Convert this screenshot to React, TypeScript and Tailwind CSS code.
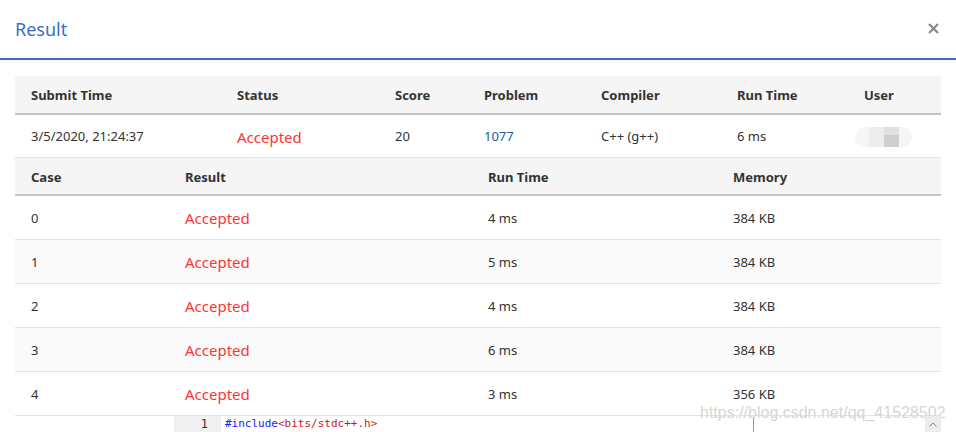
import React from "react";

const font = { fontFamily: '"Segoe UI", "Noto Sans", "Open Sans", sans-serif' };

const cases = [
  { c: "0", t: "4 ms", m: "384 KB" },
  { c: "1", t: "5 ms", m: "384 KB" },
  { c: "2", t: "4 ms", m: "384 KB" },
  { c: "3", t: "6 ms", m: "384 KB" },
  { c: "4", t: "3 ms", m: "356 KB" },
];

export default function App() {
  return (
    <div className="relative w-[956px] h-[432px] overflow-hidden bg-white text-[#333]" style={font}>
      <div className="h-[60px] flex items-center justify-between pl-[15px] pr-[17px] border-b-2 border-[#3b6cc5]">
        <div className="text-[18px] text-[#3b6cc5]">Result</div>
        <svg width="11" height="11" viewBox="0 0 11 11" className="-mt-[1px]">
          <path d="M1 1L10 10M10 1L1 10" stroke="#888" strokeWidth="2.2" />
        </svg>
      </div>
      <div className="mx-[15px] mt-[16px] text-[13px]">
        <div className="grid grid-cols-[206px_158px_89px_117px_136px_127px_93px] h-[39px] items-center bg-[#f5f5f5] border-b-2 border-[#c4c4c4] font-bold pt-[2px]">
          <div className="pl-[16px]">Submit Time</div>
          <div className="pl-[16px]">Status</div>
          <div className="pl-[16px]">Score</div>
          <div className="pl-[16px]">Problem</div>
          <div className="pl-[16px]">Compiler</div>
          <div className="pl-[16px]">Run Time</div>
          <div className="pl-[16px]">User</div>
        </div>
        <div className="grid grid-cols-[206px_158px_89px_117px_136px_127px_93px] h-[43px] items-center border-b border-[#e3e3e3] pt-[2px]">
          <div className="pl-[16px]">3/5/2020, 21:24:37</div>
          <div className="pl-[16px] text-[15px] text-[#ff3333]">Accepted</div>
          <div className="pl-[16px]">20</div>
          <div className="pl-[16px] text-[#1c58a3]">1077</div>
          <div className="pl-[16px]">C++ (g++)</div>
          <div className="pl-[16px]">6 ms</div>
          <div className="pl-[7px] flex">
            <div className="relative w-[57px] h-[20px] rounded-full bg-[#f4f4f4] overflow-hidden flex">
              <div className="w-[14px] h-full bg-[#f6f6f6]" />
              <div className="w-[15px] h-full bg-[#ececec]" />
              <div className="w-[15px] h-full flex flex-col">
                <div className="h-[8px] bg-[#e0e0e0]" />
                <div className="flex-1 bg-[#cfcfcf]" />
              </div>
              <div className="w-[13px] h-full bg-[#f5f5f5]" />
            </div>
          </div>
        </div>
        <div className="grid grid-cols-[154px_303px_245px_224px] h-[38px] items-center bg-[#f5f5f5] border-b-2 border-[#c4c4c4] font-bold pt-[4px]">
          <div className="pl-[16px]">Case</div>
          <div className="pl-[16px]">Result</div>
          <div className="pl-[16px]">Run Time</div>
          <div className="pl-[16px]">Memory</div>
        </div>
        {cases.map((r, i) => (
          <div
            key={r.c}
            className={`grid grid-cols-[154px_303px_245px_224px] h-[44px] items-center border-b border-[#e3e3e3] pt-[2px] ${i % 2 === 1 ? "bg-[#fafafa]" : "bg-white"}`}
          >
            <div className="pl-[16px]">{r.c}</div>
            <div className="pl-[16px] text-[15px] text-[#ff3333]">Accepted</div>
            <div className="pl-[16px]">{r.t}</div>
            <div className="pl-[16px]">{r.m}</div>
          </div>
        ))}
      </div>
      <div className="flex h-[16px] items-center">
        <div className="w-[174px]" />
        <div className="w-[47px] h-full bg-[#f0f0f0] text-right pr-[13px] text-[12px] leading-[16px] text-[#333]" style={{ fontFamily: '"DejaVu Sans Mono", monospace' }}>1</div>
        <div className="pl-[4px] text-[11px] leading-[16px]" style={{ fontFamily: '"DejaVu Sans Mono", monospace' }}>
          <span className="text-[#1b1bff]">#include</span>
          <span className="text-[#c41a16]">&lt;bits/stdc++.h&gt;</span>
        </div>
      </div>
      <div className="absolute left-[753px] top-[418px] w-px h-[14px] bg-[#999]" />
      <div className="absolute left-[700px] top-[403px] text-[16px] text-[#d6d6d6] leading-[20px] whitespace-nowrap" style={{ fontFamily: '"Liberation Sans", Arial, sans-serif' }}>
        https://blog.csdn.net/qq_41528502
      </div>
      <div className="absolute left-[925px] top-[416px] w-[16px] h-[16px] bg-[#ececec] flex items-center justify-center">
        <svg width="8" height="5" viewBox="0 0 8 5">
          <path d="M0.5 4.5L4 1L7.5 4.5" stroke="#888" strokeWidth="1" fill="none" />
        </svg>
      </div>
    </div>
  );
}
